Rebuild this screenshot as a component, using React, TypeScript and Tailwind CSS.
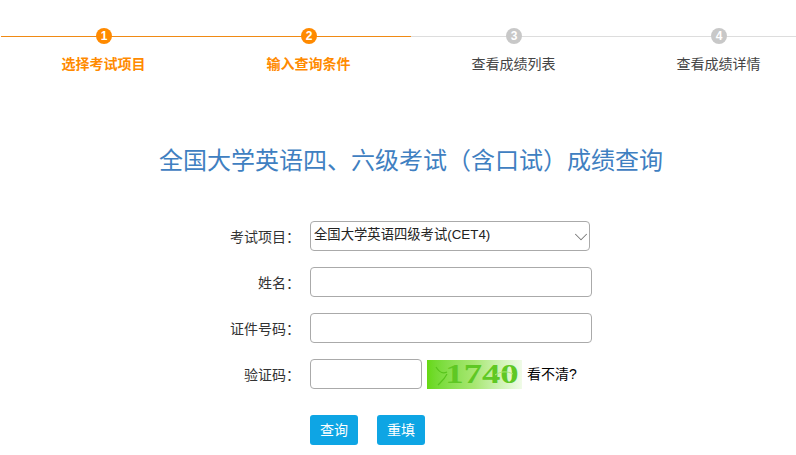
import { ChevronDown } from "lucide-react";

const FONT = "font-['Liberation_Sans','Noto_Sans_CJK_SC',sans-serif]";

const STEPS = [
  { n: 1, label: "选择考试项目", done: true },
  { n: 2, label: "输入查询条件", done: true },
  { n: 3, label: "查看成绩列表", done: false },
  { n: 4, label: "查看成绩详情", done: false },
];

function Step({ n, label, done }: { n: number; label: string; done: boolean }) {
  return (
    <div className="flex w-[205px] shrink-0 flex-col items-center">
      <div className="relative flex h-4 w-full items-center justify-center">
        <div className={`h-px w-full ${done ? "bg-[#f08a14]" : "bg-[#dddddd]"}`} />
        <span
          className={`absolute left-[95px] top-0 flex size-4 items-center justify-center rounded-full text-xs font-bold leading-none text-white ${
            done ? "bg-[#ff8a00]" : "bg-[#c8c8c8]"
          }`}
        >
          {n}
        </span>
      </div>
      <div className={`mt-[10px] text-[14px] leading-5 ${done ? "font-bold text-[#ff8a00]" : "text-[#444444]"}`}>
        {label}
      </div>
    </div>
  );
}

function Row({ label, children }: { label: string; children: React.ReactNode }) {
  return (
    <div className="flex h-[30px] items-center">
      <label className="w-[300px] pt-[3px] text-right text-[14px] text-[#333333]">{label}</label>
      <div className="ml-[10px] flex items-center">{children}</div>
    </div>
  );
}

export default function App() {
  return (
    <div className={`h-[455px] w-[796px] overflow-hidden bg-white ${FONT}`}>
      <div className="ml-px flex w-[820px] pt-[28px]">
        {STEPS.map((s) => (
          <Step key={s.n} {...s} />
        ))}
      </div>

      <h1 className="mt-[71px] ml-[159px] whitespace-nowrap text-[24px] leading-8 font-normal text-[#3f80c1]">
        全国大学英语四、六级考试（含口试）成绩查询
      </h1>

      <form className="mt-[44px] flex flex-col gap-4">
        <Row label="考试项目：">
          <div className="relative">
            <select className="block h-[30px] w-[280px] appearance-none rounded border border-[#aaaaaa] bg-white pb-[2px] pl-[3px] text-[13.33px] text-[#222222] outline-none">
              <option>全国大学英语四级考试(CET4)</option>
            </select>
            <ChevronDown className="absolute right-[-1.5px] top-[4.5px] size-[22px] text-[#777777]" strokeWidth={1.1} />
          </div>
        </Row>
        <Row label="姓名：">
          <input className="h-[30px] w-[282px] rounded border border-[#aaaaaa] bg-white outline-none" />
        </Row>
        <Row label="证件号码：">
          <input className="h-[30px] w-[282px] rounded border border-[#aaaaaa] bg-white outline-none" />
        </Row>
        <Row label="验证码：">
          <input className="h-[30px] w-[112px] rounded border border-[#aaaaaa] bg-white outline-none" />
          <div className="relative ml-[5px] flex h-[29px] w-[95px] items-center justify-center overflow-hidden bg-gradient-to-r from-[#66d812] via-[#a8e772] to-[#f0fbe8]">
            <span className="ml-[14px] scale-x-[1.36] font-['Liberation_Serif',serif] text-[27px] leading-none font-bold text-[#5fc824]">
              1740
            </span>
            <svg className="absolute inset-0" width="95" height="29" viewBox="0 0 95 29" fill="none">
              <path d="M9 7 C12 12 16 14 20 12 M11 25 C14 22 17 20 20 14" stroke="#58c41c" strokeWidth="1.2" />
              <path d="M68 15 C74 11 80 11 86 14" stroke="#a8e772" strokeWidth="1" />
            </svg>
          </div>
          <span className="ml-[5px] text-[14px] text-black">看不清?</span>
        </Row>
        <div className="mt-[10px] flex gap-[19px] pl-[310px]">
          <button type="button" className="h-[30px] w-12 rounded-[3px] bg-[#0ea5e4] text-[14px] text-white">
            查询
          </button>
          <button type="button" className="h-[30px] w-12 rounded-[3px] bg-[#0ea5e4] text-[14px] text-white">
            重填
          </button>
        </div>
      </form>
    </div>
  );
}
